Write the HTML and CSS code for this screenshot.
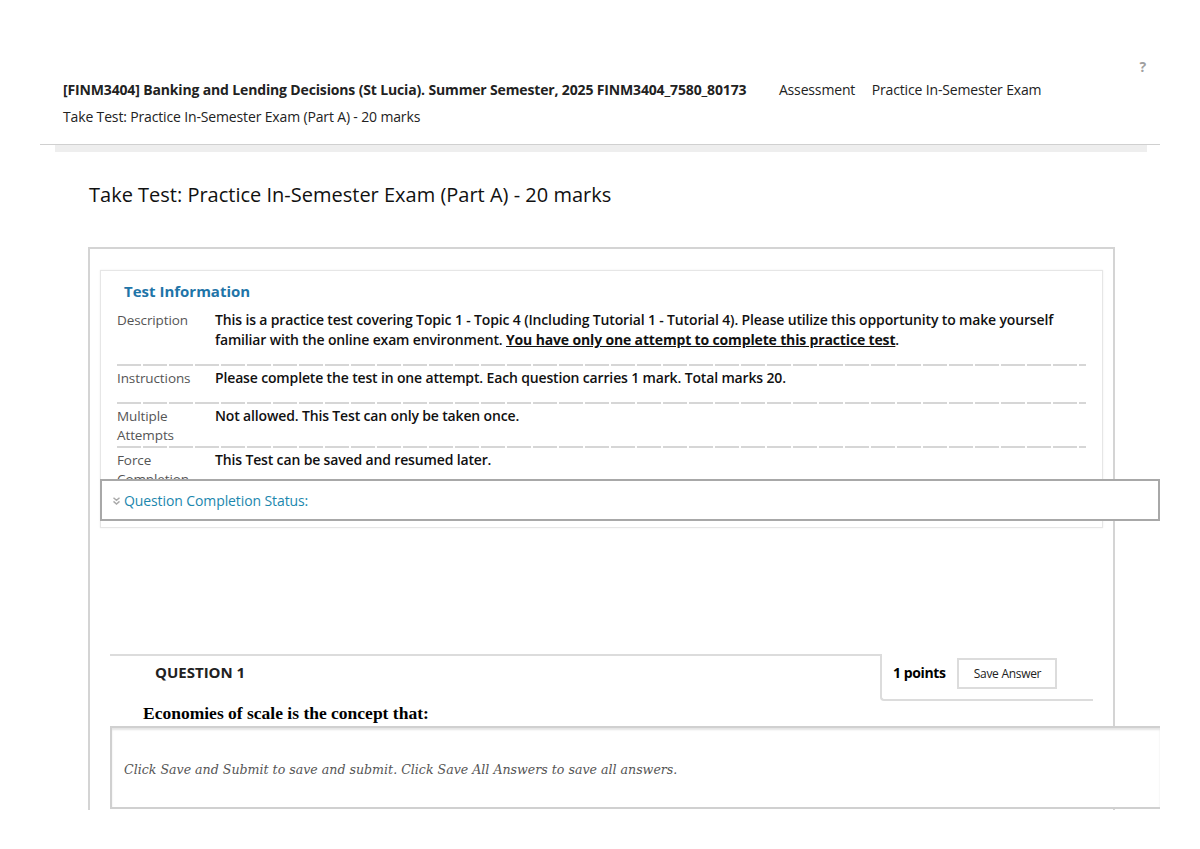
FILE: index.html
```html
<!DOCTYPE html>
<html>
<head>
    <title>Take Test: Practice In-Semester Exam (Part A) - 20 marks</title>
    <link rel="stylesheet" href="styles.css">
</head>

<body>
    <div class="header">
        <div class="help-row"><span class="help">?</span></div>
        <div class="crumbs">
            <span class="crumb-course">[FINM3404] Banking and Lending Decisions (St Lucia). Summer Semester, 2025 FINM3404_7580_80173</span>
            <span class="crumb">Assessment</span>
            <span class="crumb">Practice In-Semester Exam</span>
        </div>
        <div class="crumb-page">Take Test: Practice In-Semester Exam (Part A) - 20 marks</div>
    </div>
    <div class="band"></div>

    <h1 class="page-title">Take Test: Practice In-Semester Exam (Part A) - 20 marks</h1>

    <div class="test-box">
        <div class="info-box">
            <div class="info-scroll">
                <h2 class="info-title">Test Information</h2>
                <div class="info-row">
                    <div class="info-label">Description</div>
                    <div class="info-value">This is a practice test covering Topic 1 - Topic 4 (Including Tutorial 1 - Tutorial 4). Please utilize this opportunity to make yourself familiar with the online exam environment. <span class="must">You have only one attempt to complete this practice test</span>.</div>
                </div>
                <div class="info-row">
                    <div class="info-label">Instructions</div>
                    <div class="info-value">Please complete the test in one attempt. Each question carries 1 mark. Total marks 20.</div>
                </div>
                <div class="info-row tight">
                    <div class="info-label">Multiple Attempts</div>
                    <div class="info-value">Not allowed. This Test can only be taken once.</div>
                </div>
                <div class="info-row">
                    <div class="info-label">Force Completion</div>
                    <div class="info-value">This Test can be saved and resumed later.</div>
                </div>
            </div>
            <div class="status-bar">
                <svg class="status-arrow" width="7" height="8" viewBox="0 0 7 8">
                    <path d="M0.5 0.8 L3.5 3.4 L6.5 0.8 M0.5 4.4 L3.5 7 L6.5 4.4" fill="none" stroke="#a9a9a9" stroke-width="1.4"/>
                </svg>
                <span class="status-text">Question Completion Status:</span>
            </div>
        </div>

        <div class="question">
            <div class="question-head">
                <div class="question-num">QUESTION 1</div>
                <div class="question-tab">
                    <span class="points">1 points</span>
                    <button class="save-button">Save Answer</button>
                </div>
            </div>
            <div class="question-text">Economies of scale is the concept that:</div>
        </div>
        <div class="submit-box">
            <p class="submit-note">Click Save and Submit to save and submit. Click Save All Answers to save all answers.</p>
        </div>
    </div>
</body>
</html>
```

FILE: styles.css
```css
body {
    margin: 0;
    font-family: "Open Sans", "Liberation Sans", sans-serif;
    color: #000;
    background: #fff;
}

.header {
    margin: 0 40px;
    padding: 58px 0 18px 23px;
    border-bottom: 1px solid #d0d0d0;
    font-size: 14px;
    line-height: 18px;
    letter-spacing: -0.15px;
}

.help-row {
    text-align: right;
    padding-right: 14px;
}

.help {
    color: #a0a0a0;
    font-weight: bold;
    font-size: 14px;
}

.crumbs {
    margin-top: 5px;
    color: #222;
}

.crumb-course {
    font-weight: bold;
    margin-right: 29px;
}

.crumb {
    margin-right: 13px;
}

.crumb-page {
    margin-top: 9px;
    color: #222;
}

.band {
    margin: 0 53px 0 55px;
    height: 7px;
    background: #eeeeee;
}

.page-title {
    margin: 29px 0 0 89px;
    font-size: 20px;
    line-height: 28px;
    font-weight: normal;
    color: #111;
}

.test-box {
    margin: 38px 0 0 88px;
    width: 1023px;
    height: 561px;
    border: 2px solid #d4d4d4;
    border-bottom: none;
}

.info-box {
    margin: 21px 0 0 10px;
    width: 1001px;
    border: 1px solid #e6e6e6;
    box-shadow: 0 0 2px #eee;
    padding-bottom: 6px;
}

.info-scroll {
    height: 208px;
    overflow: hidden;
    padding: 0 16px;
}

.info-title {
    margin: 10px 0 8px 7px;
    font-size: 15px;
    line-height: 21px;
    color: #1f75a8;
}

.info-row {
    display: flex;
    padding: 0 0 14px;
    font-size: 14px;
    line-height: 20px;
}

.info-row + .info-row {
    padding-top: 4px;
    background: repeating-linear-gradient(to right, #d6d6d6 0 24px, transparent 24px 26px) top left / 100% 2px no-repeat;
}

.info-row.tight {
    padding-bottom: 1px;
}

.info-label {
    width: 98px;
    flex-shrink: 0;
    color: #555;
    font-size: 13.5px;
    line-height: 19px;
    padding-top: 1px;
    letter-spacing: -0.1px;
}

.info-value {
    color: #111;
    font-weight: 600;
    letter-spacing: -0.15px;
}

.must {
    font-weight: bold;
    text-decoration: underline;
}

.status-bar {
    margin-left: -1px;
    width: 1056px;
    height: 38px;
    border: 2px solid #a8a8a8;
    background: #fff;
    display: flex;
    align-items: center;
    font-size: 14px;
}

.status-arrow {
    margin: 2px 4px 0 11px;
}

.status-text {
    color: #1b87ae;
    letter-spacing: -0.1px;
}

.question {
    margin: 126px 0 0 20px;
    width: 983px;
}

.question-head {
    display: flex;
    height: 47px;
}

.question-num {
    flex: 1;
    border-top: 2px solid #dcdcdc;
    padding: 6px 0 0 45px;
    font-size: 15px;
    font-weight: bold;
    color: #222;
}

.question-tab {
    width: 200px;
    border-left: 2px solid #dcdcdc;
    border-bottom: 2px solid #dcdcdc;
    border-bottom-left-radius: 4px;
    display: flex;
    align-items: flex-start;
    padding: 4px 0 0 11px;
}

.points {
    font-size: 14px;
    font-weight: bold;
    letter-spacing: -0.4px;
    margin-top: 5px;
    margin-right: 12px;
}

.save-button {
    width: 100px;
    height: 31px;
    border: 2px solid #dcdcdc;
    background: #fff;
    font-family: "Open Sans", "Liberation Sans", sans-serif;
    font-size: 12px;
    letter-spacing: -0.3px;
    color: #222;
    padding: 0;
}

.question-text {
    padding-left: 33px;
    font-family: "Liberation Serif", serif;
    font-weight: bold;
    font-size: 17.5px;
    line-height: 24px;
    margin-bottom: 1px;
}

.submit-box {
    margin-left: 20px;
    width: 1048px;
    height: 79px;
    border: 2px solid #d0d0d0;
    border-right: none;
    box-shadow: inset 0 2px 2px #e4e4e4;
    background: #fff;
    display: flex;
    align-items: center;
}

.submit-note {
    margin: 4px 0 0 12px;
    font-family: "DejaVu Serif", serif;
    font-style: italic;
    font-size: 12.6px;
    color: #555;
}
```
